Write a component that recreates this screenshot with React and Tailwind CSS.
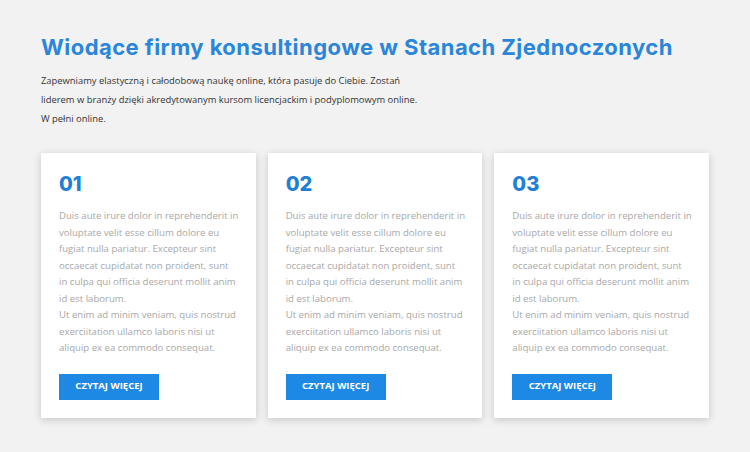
const cards = [
  { num: '01' },
  { num: '02' },
  { num: '03' },
]

const lines = [
  'Duis aute irure dolor in reprehenderit in',
  'voluptate velit esse cillum dolore eu',
  'fugiat nulla pariatur. Excepteur sint',
  'occaecat cupidatat non proident, sunt',
  'in culpa qui officia deserunt mollit anim',
  'id est laborum.',
  'Ut enim ad minim veniam, quis nostrud',
  'exerciitation ullamco laboris nisi ut',
  'aliquip ex ea commodo consequat.',
]

function StepCard({ num }) {
  return (
    <div className="bg-white shadow-[0_2px_8px_rgba(0,0,0,0.18)] px-[18px] pt-[20px] pb-[18px]">
      <h3 className="font-['Inter',sans-serif] text-[20px] font-extrabold leading-[16px] text-[#1f7fd8] py-[3px]">{num}</h3>
      <div className="mt-[13px] font-['Open_Sans',sans-serif] text-[9.6px] leading-[16.5px] text-[#a8a8a8]">
        {lines.map((l) => (
          <p key={l} className="whitespace-nowrap">{l}</p>
        ))}
      </div>
      <button className="mt-[17px] h-[26px] w-[100px] bg-[#1e88e5] font-['Open_Sans',sans-serif] text-[9.5px] font-bold uppercase text-white">
        Czytaj więcej
      </button>
    </div>
  )
}

export default function App() {
  return (
    <div className="w-full min-h-screen bg-[#f2f2f2] px-[41px] pt-[35px] pb-[35px]">
      <h1 className="font-['Inter',sans-serif] text-[22px] font-bold leading-[24px] text-[#2a86d9] tracking-[0.45px]">
        Wiodące firmy konsultingowe w Stanach Zjednoczonych
      </h1>
      <p className="mt-[12px] max-w-[420px] font-['Open_Sans',sans-serif] text-[9.4px] leading-[19px] text-[#333]">
        Zapewniamy elastyczną i całodobową naukę online, która pasuje do Ciebie. Zostań
        <br />
        liderem w branży dzięki akredytowanym kursom licencjackim i podyplomowym online.
        <br />
        W pełni online.
      </p>
      <div className="mt-[25px] grid grid-cols-3 gap-[12px]">
        {cards.map((c) => (
          <StepCard key={c.num} num={c.num} />
        ))}
      </div>
    </div>
  )
}
